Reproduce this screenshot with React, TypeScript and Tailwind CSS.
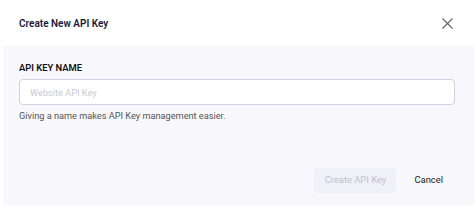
export default function App() {
  return (
    <div className="w-[474px] h-[205px] bg-white overflow-hidden flex flex-col" style={{ fontFamily: 'Roboto, "Noto Sans", sans-serif' }}>
      {/* Header */}
      <div className="h-[46px] flex items-center justify-between pl-[19px] pr-[21px]">
        <h2 className="text-[10px] font-semibold text-[#1c1b3a]">Create New API Key</h2>
        <button className="w-[12px] h-[12px] flex items-center justify-center text-[#666]">
          <svg width="11" height="11" viewBox="0 0 11 11" fill="none" stroke="currentColor" strokeWidth="1.2">
            <path d="M0.5 0.5L10.5 10.5M10.5 0.5L0.5 10.5" />
          </svg>
        </button>
      </div>

      {/* Body */}
      <div className="flex-1 ml-[3px] bg-[#f8f8fc] flex flex-col pl-[16px] pr-[19px] pt-[16px]">
        <label className="text-[9.4px] font-semibold text-[#111] uppercase leading-[12px]">
          API Key Name
        </label>
        <input
          type="text"
          placeholder="Website API Key"
          className="mt-[5px] h-[26px] w-full rounded-[4px] border border-[#d2d0e2] bg-white px-[10px] text-[9.2px] placeholder:text-[#c9c9d3] outline-none"
        />
        <p className="mt-[5px] text-[9.2px] text-[#555] leading-[12px]">
          Giving a name makes API Key management easier.
        </p>

        <div className="flex-1" />

        <div className="flex items-center justify-end gap-[18px] pb-[12px] pr-[12px]">
          <button
            disabled
            className="h-[25px] w-[82px] rounded-[3px] bg-[#f0f0f8] text-[9.4px] text-[#c2c2cd]"
          >
            Create API Key
          </button>
          <button className="text-[9.4px] text-[#222]">Cancel</button>
        </div>
      </div>
    </div>
  );
}
